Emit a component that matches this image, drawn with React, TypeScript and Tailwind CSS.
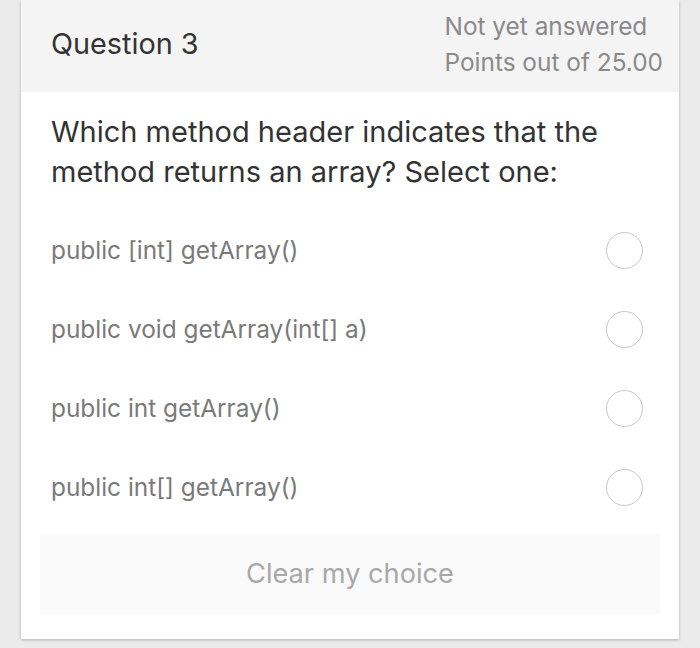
import { useState } from 'react'

const OPTIONS = [
  'public [int] getArray()',
  'public void getArray(int[] a)',
  'public int getArray()',
  'public int[] getArray()',
]

export default function App() {
  const [selected, setSelected] = useState<number | null>(null)

  return (
    <div className="min-h-[648px] w-[700px] bg-[#ebebeb] pl-[21px] pr-[21px] font-['Inter',sans-serif]">
      <div className="relative bg-white pb-[25px] shadow-[0_1px_3px_rgba(0,0,0,0.25)]">
        {/* Header */}
        <div className="flex h-[92px] items-center justify-between bg-[#f4f4f4] pb-[4px] pl-[30px] pr-[16px]">
          <h2 className="text-[28.8px] text-[#333]">Question 3</h2>
          <div className="text-[24.4px] leading-[36px] text-[#8a8a8a]">
            <p>Not yet answered</p>
            <p>Points out of 25.00</p>
          </div>
        </div>

        {/* Question */}
        <p className="px-[30px] pt-[20px] text-[29px] leading-[40px] text-[#333]">
          Which method header indicates that the method returns an array? Select one:
        </p>

        {/* Options */}
        <div className="mt-[19px]">
          {OPTIONS.map((opt, i) => (
            <button
              key={i}
              onClick={() => setSelected(i)}
              className="flex h-[79px] w-full items-center justify-between pl-[30px] pr-[36px] text-left"
            >
              <span className="text-[24.4px] text-[#7a7a7a]">{opt}</span>
              <span className="flex h-[37px] w-[37px] items-center justify-center rounded-full border-[1.5px] border-[#c8c8c8]">
                {selected === i && <span className="h-[17px] w-[17px] rounded-full bg-[#007aff]" />}
              </span>
            </button>
          ))}
        </div>

        {/* Clear */}
        <div className="mt-[7px] px-[19px]">
          <button
            onClick={() => setSelected(null)}
            className="h-[80px] w-full bg-[#fafafa] text-[27.2px] text-[#a8a8a8]"
          >
            Clear my choice
          </button>
        </div>
      </div>
    </div>
  )
}
